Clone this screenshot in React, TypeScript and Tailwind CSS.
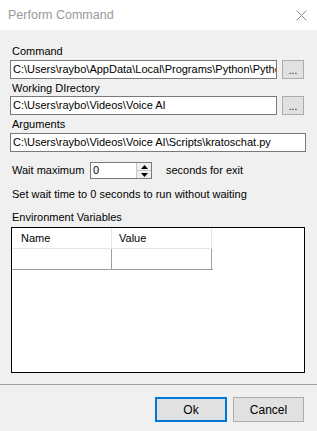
import React from "react";

function TextBox({ value, className }: { value: string; className: string }) {
  return (
    <div
      className={`h-[19px] bg-white border border-[#7a7a7a] pl-[2px] leading-[17px] overflow-hidden whitespace-nowrap ${className}`}
    >
      {value}
    </div>
  );
}

function Browse() {
  return (
    <div className="ml-[5px] w-[22px] h-[19px] bg-[#e1e1e1] border border-[#adadad] flex items-end justify-center leading-[14px] text-[10px]">
      ...
    </div>
  );
}

export default function App() {
  return (
    <div className="w-[317px] h-[431px] bg-[#f0f0f0] flex flex-col font-['Liberation_Sans',Arial,sans-serif] text-[11px] text-black">
      <div className="h-[30px] bg-white flex items-center justify-between pl-[8px] pr-[10px] shrink-0">
        <span className="text-[12.5px] text-[#9a9a9a]">Perform Command</span>
        <svg width="11" height="11" viewBox="0 0 11 11" className="mt-[1px]">
          <path d="M0.5 0.5 L10.5 10.5 M10.5 0.5 L0.5 10.5" stroke="#8a8a8a" strokeWidth="1" />
        </svg>
      </div>
      <div className="flex-1 flex flex-col pl-[10px] pt-[14px]">
        <div className="h-[14px] leading-[14px] pl-[2px]">Command</div>
        <div className="flex mt-[2px]">
          <TextBox className="w-[267px]" value={"C:\\Users\\raybo\\AppData\\Local\\Programs\\Python\\Python"} />
          <Browse />
        </div>
        <div className="h-[14px] leading-[14px] pl-[2px] mt-[2px]">Working DIrectory</div>
        <div className="flex mt-[1px]">
          <TextBox className="w-[267px]" value={"C:\\Users\\raybo\\Videos\\Voice AI"} />
          <Browse />
        </div>
        <div className="h-[14px] leading-[14px] pl-[2px] mt-[2px]">Arguments</div>
        <div className="flex mt-[2px]">
          <TextBox className="w-[296px]" value={"C:\\Users\\raybo\\Videos\\Voice AI\\Scripts\\kratoschat.py"} />
        </div>
        <div className="flex items-center mt-[10px] h-[17px]">
          <div className="w-[80px] pl-[2px]">Wait maximum</div>
          <div className="w-[62px] h-[17px] bg-white border border-[#7a7a7a] flex">
            <div className="flex-1 pl-[2px] leading-[15px]">0</div>
            <div className="w-[15px] h-[15px] flex flex-col border-l border-[#c8c8c8]">
              <div className="flex-1 bg-[#f0f0f0] border-b border-[#c8c8c8] flex items-center justify-center">
                <svg width="7" height="4" viewBox="0 0 7 4">
                  <path d="M3.5 0 L7 4 L0 4 Z" fill="#000" />
                </svg>
              </div>
              <div className="flex-1 bg-[#f0f0f0] flex items-center justify-center">
                <svg width="7" height="4" viewBox="0 0 7 4">
                  <path d="M0 0 L7 0 L3.5 4 Z" fill="#000" />
                </svg>
              </div>
            </div>
          </div>
          <div className="ml-[14px]">seconds for exit</div>
        </div>
        <div className="h-[14px] leading-[14px] pl-[2px] mt-[8px]">
          Set wait time to 0 seconds to run without waiting
        </div>
        <div className="h-[14px] leading-[14px] pl-[2px] mt-[9px]">Environment Variables</div>
        <div className="mt-[3px] ml-[1px] w-[294px] h-[146px] bg-white border border-black">
          <div className="flex h-[21px] border-b border-[#e5e5e5] w-[201px]">
            <div className="w-[100px] border-r border-[#e5e5e5] pl-[9px] leading-[20px]">Name</div>
            <div className="w-[100px] border-r border-[#e5e5e5] pl-[7px] leading-[20px]">Value</div>
          </div>
          <div className="flex h-[21px] border-b border-[#a0a0a0] w-[201px]">
            <div className="w-[100px] border-r border-[#a0a0a0]"></div>
            <div className="w-[100px] border-r border-[#a0a0a0]"></div>
          </div>
        </div>
      </div>
      <div className="h-[47px] shrink-0 border-t border-[#a0a0a0] flex justify-end items-start pt-[12px] pr-[13px] gap-[6px]">
        <div className="w-[72px] h-[25px] bg-[#e1e1e1] border-2 border-[#0078d7] flex items-center justify-center text-[12px]">
          Ok
        </div>
        <div className="w-[71px] h-[25px] bg-[#e1e1e1] border border-[#adadad] flex items-center justify-center text-[12px]">
          Cancel
        </div>
      </div>
    </div>
  );
}
